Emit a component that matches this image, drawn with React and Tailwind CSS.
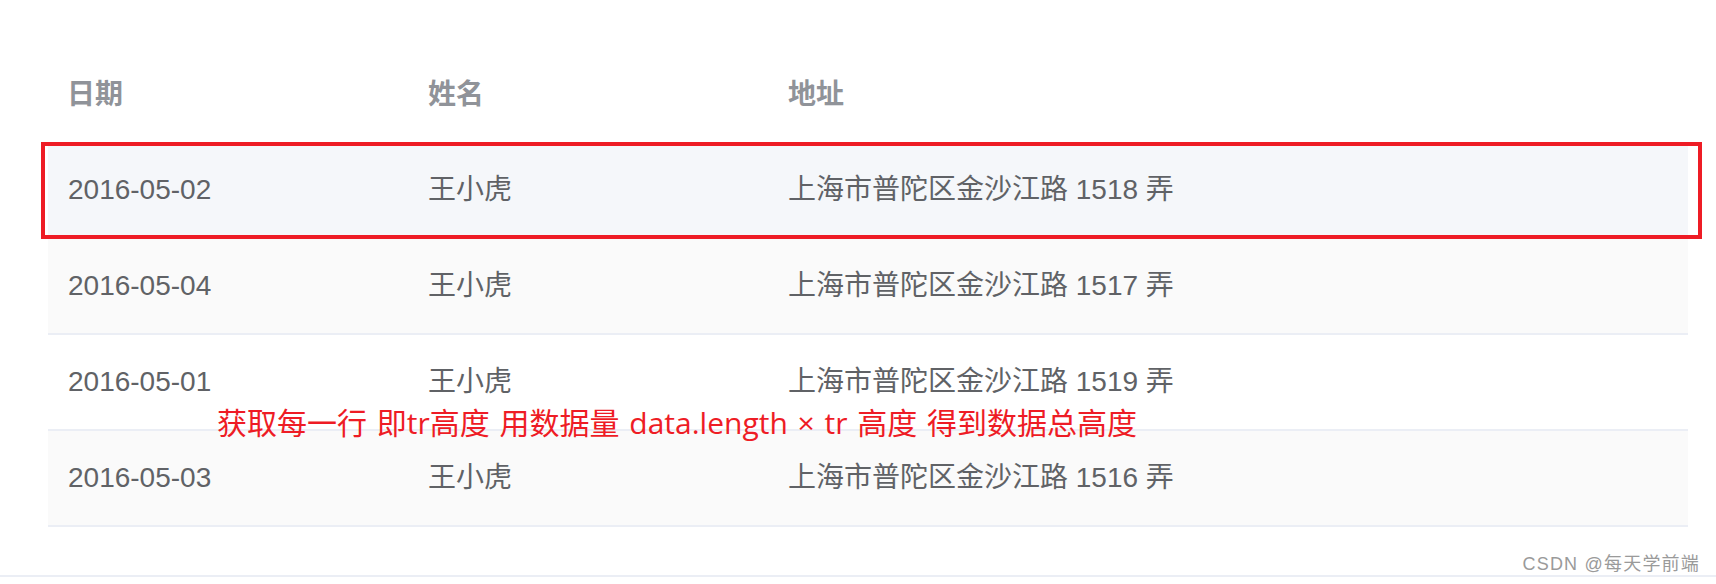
const rows = [
  { date: "2016-05-02", name: "王小虎", address: "上海市普陀区金沙江路 1518 弄", bg: "bg-[#f5f7fa]" },
  { date: "2016-05-04", name: "王小虎", address: "上海市普陀区金沙江路 1517 弄", bg: "bg-[#fafafa]" },
  { date: "2016-05-01", name: "王小虎", address: "上海市普陀区金沙江路 1519 弄", bg: "bg-white" },
  { date: "2016-05-03", name: "王小虎", address: "上海市普陀区金沙江路 1516 弄", bg: "bg-[#fafafa]" },
];

export default function App() {
  return (
    <div
      className="relative w-[1716px] h-[584px] bg-white overflow-hidden"
      style={{ fontFamily: '"Liberation Sans", "Noto Sans CJK SC", sans-serif' }}
    >
      <div className="pt-[47px] pl-[48px] pr-[28px]">
        {/* Header */}
        <div className="flex h-[96px] items-center text-[28px] font-bold text-[#909399]">
          <div className="w-[359px] pl-[19px]">日期</div>
          <div className="w-[360px] pl-[21px]">姓名</div>
          <div className="flex-1 pl-[21px]">地址</div>
        </div>

        {/* Body */}
        {rows.map((row) => (
          <div
            key={row.date}
            className={`flex h-[96px] items-center border-b-2 border-[#ebeef5] text-[28px] text-[#606266] ${row.bg}`}
          >
            <div className="w-[359px] pl-[20px]">{row.date}</div>
            <div className="w-[360px] pl-[21px]">{row.name}</div>
            <div className="flex-1 pl-[21px]">{row.address}</div>
          </div>
        ))}
      </div>

      {/* Watermark + bottom line */}
      <div className="mt-[26px] flex justify-end pr-[16px] h-[20px] items-end">
        <span className="text-[18px] leading-none tracking-[1.2px] text-[#9a9a9a]">
          CSDN @每天学前端
        </span>
      </div>
      <div className="mt-[2px] h-[2px] bg-[#ebeef5]" />

      {/* Red highlight box */}
      <div className="absolute left-[41px] top-[142px] w-[1661px] h-[97px] border-4 border-[#ee1c25]" />

      {/* Annotation */}
      <div
        className="absolute left-[217px] top-[408px] text-[30px] leading-none text-[#ee1c25] whitespace-nowrap [word-spacing:2px]"
        style={{ fontFamily: '"Open Sans", "Noto Sans CJK SC", sans-serif' }}
      >
        获取每一行 即tr高度 用数据量 data.length × tr 高度 得到数据总高度
      </div>
    </div>
  );
}
